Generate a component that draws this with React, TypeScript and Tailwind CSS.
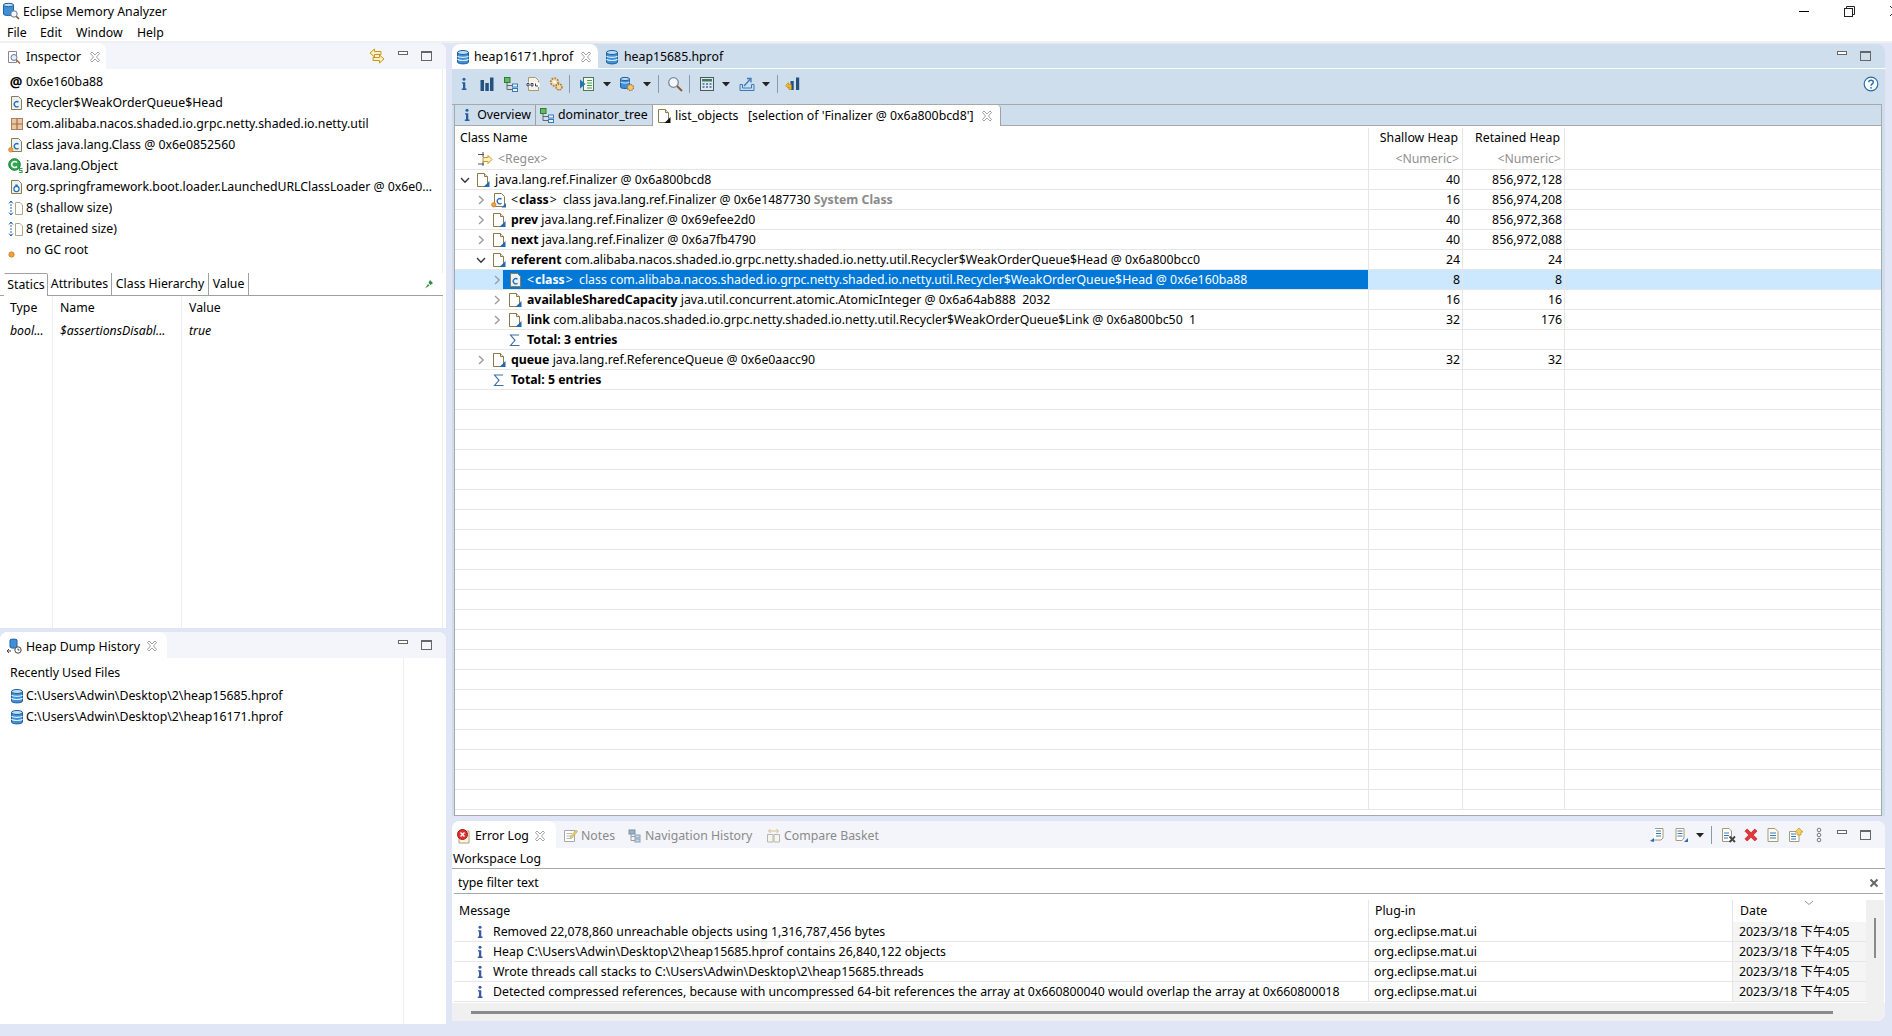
import React from "react";

const Db = ({ s = 16 }: { s?: number }) => (
  <svg width={s} height={s} viewBox="0 0 16 16" className="shrink-0">
    <path d="M2.5 3.5C2.5 2 13.5 2 13.5 3.5V13C13.5 15.5 2.5 15.5 2.5 13Z" fill="#3f8fd6" stroke="#22609e" />
    <ellipse cx="8" cy="3.5" rx="5.5" ry="2" fill="#bcdcf4" stroke="#22609e" />
    <path d="M2.5 7C4 8.8 12 8.8 13.5 7M2.5 10.2C4 12 12 12 13.5 10.2" fill="none" stroke="#d8ecfa" strokeWidth="1.1" />
  </svg>
);
const Doc = ({ corner = "#2468aa" }: { corner?: string }) => (
  <svg width={16} height={16} viewBox="0 0 16 16" className="shrink-0">
    <path d="M2.5 1.5H9.5L12.5 4.5V14.5H2.5Z" fill="#fff" stroke="#8f7a48" />
    <path d="M9.5 1.5V4.5H12.5" fill="#f0e8d0" stroke="#8f7a48" />
    <path d="M14.5 9V15H8.5Z" fill={corner} />
  </svg>
);
const ClassDoc = ({ dot = false, light = false }: { dot?: boolean; light?: boolean }) => (
  <svg width={16} height={16} viewBox="0 0 16 16" className="shrink-0">
    <path d="M3.5 1.5H10.5L13.5 4.5V14.5H3.5Z" fill={light ? "#e8f2fb" : "#fff"} stroke="#8f7a48" />
    <path d="M10.5 7.2A2.6 2.6 0 1 0 10.5 11.2" fill="none" stroke="#2a6cb0" strokeWidth="1.3" />
    {dot && <circle cx="2.8" cy="12.8" r="2.3" fill="#f0a040" stroke="#c87820" strokeWidth="0.6" />}
    {!light && <path d="M15 11V15.5H10.5Z" fill="#2a6cb0" />}
  </svg>
);
const Sigma = () => (
  <svg width={16} height={16} viewBox="0 0 16 16" className="shrink-0">
    <path d="M12 3H3.5L8 8.3L3.5 13.5H12.5" fill="none" stroke="#3a6ea5" strokeWidth="1.1" />
  </svg>
);
const Chev = ({ open = false, light = false }: { open?: boolean; light?: boolean }) => (
  <svg width={12} height={12} viewBox="0 0 12 12" className="shrink-0">
    {open ? (
      <path d="M2 4L6 8.2L10 4" fill="none" stroke="#333" strokeWidth="1.3" />
    ) : (
      <path d="M4 2L8.2 6L4 10" fill="none" stroke={light ? "#8fa0ac" : "#999"} strokeWidth="1.3" />
    )}
  </svg>
);
const Min = () => <span className="block h-[4px] w-[10px] border border-[#666] bg-white" />;
const Max = () => (
  <span className="block h-[10px] w-[11px] border border-[#666] border-t-[2px] bg-transparent" />
);
const CloseX = () => (
  <svg width={12} height={12} viewBox="0 0 12 12" className="shrink-0">
    <path d="M1.5 2.5L3 1L6 4L9 1L10.5 2.5L7.5 6L10.5 9.5L9 11L6 8L3 11L1.5 9.5L4.5 6Z" fill="#fff" stroke="#8a8a8a" strokeWidth="0.8" />
  </svg>
);
const SizeIcon = () => (
  <svg width={16} height={16} viewBox="0 0 16 16" className="shrink-0">
    <path d="M7.5 2.5H12L14.5 5V14.5H7.5Z" fill="#fff" stroke="#b0a888" />
    <path d="M3 1V15" stroke="#2a6cb0" strokeDasharray="2 1" />
    <path d="M1 3.5L3 1L5 3.5M1 12.5L3 15L5 12.5" fill="none" stroke="#2a6cb0" />
  </svg>
);
const InfoI = ({ c = "#2a5d9c" }: { c?: string }) => (
  <svg width={16} height={16} viewBox="0 0 16 16" className="shrink-0">
    <circle cx="8" cy="3.2" r="1.5" fill={c} />
    <path d="M6 6.2H9.3V12.5H10.5V14H5.8V12.5H7V7.6H6Z" fill={c} />
  </svg>
);
const Tree = () => (
  <svg width={16} height={16} viewBox="0 0 16 16" className="shrink-0">
    <path d="M4 6.5V13.5H9M4 9.5H9" fill="none" stroke="#666" />
    <rect x="1.5" y="1.5" width="5.5" height="5" fill="#63bb63" stroke="#2e7d32" />
    <rect x="9.5" y="8" width="5" height="3" fill="#e8f2fb" stroke="#3a7ab8" />
    <rect x="9.5" y="12.5" width="5" height="3" fill="#e8f2fb" stroke="#3a7ab8" />
  </svg>
);
const Bars = () => (
  <svg width={16} height={16} viewBox="0 0 16 16" className="shrink-0">
    <rect x="1.5" y="4" width="3.5" height="11" fill="#24527f" />
    <rect x="6.3" y="7" width="3.5" height="8" fill="#24527f" />
    <rect x="11" y="1.5" width="3.5" height="13.5" fill="#24527f" />
  </svg>
);
const Oql = () => (
  <svg width={16} height={16} viewBox="0 0 16 16" className="shrink-0">
    <path d="M3.5 1.5H10.5L13.5 4.5V14.5H3.5Z" fill="#f6f2e6" stroke="#a89a78" />
    <path d="M1.5 6.5H14.5V11H1.5Z" fill="#ffffff" />
    <path d="M2 7.5V10H4V7.5ZM6 7.5V10H8V7.5ZM10.5 7.5V10H13" fill="none" stroke="#2c3a5a" />
  </svg>
);
const Gear = () => (
  <svg width={16} height={16} viewBox="0 0 16 16" className="shrink-0">
    <circle cx="6.5" cy="6" r="3.7" fill="#f2e2c0" stroke="#b08840" strokeWidth="2" strokeDasharray="1.8 1" />
    <circle cx="11" cy="11" r="3" fill="#f0d8a8" stroke="#a87830" strokeWidth="1.4" strokeDasharray="1.6 0.9" />
    <circle cx="6.5" cy="6" r="1.2" fill="#fff" />
  </svg>
);
const Outline = () => (
  <svg width={16} height={16} viewBox="0 0 16 16" className="shrink-0">
    <rect x="4.5" y="1.5" width="10" height="13" fill="#f2f8ec" stroke="#4a7a5a" />
    <path d="M8 4.5H13M8 7H13M8 9.5H13M8 12H13" stroke="#4a9a5a" />
    <path d="M1 3.5L6.5 8L1 12.5Z" fill="#1f78b8" />
  </svg>
);
const DbGear = () => (
  <svg width={16} height={16} viewBox="0 0 16 16" className="shrink-0">
    <path d="M1.5 3C1.5 1.5 10.5 1.5 10.5 3V11C10.5 13 1.5 13 1.5 11Z" fill="#3f8fd6" stroke="#22609e" />
    <ellipse cx="6" cy="3" rx="4.5" ry="1.6" fill="#bcdcf4" stroke="#22609e" />
    <path d="M1.5 6C3 7.4 9 7.4 10.5 6" fill="none" stroke="#d8ecfa" />
    <circle cx="11.5" cy="11.5" r="3" fill="#f0c878" stroke="#a87830" strokeWidth="1.3" strokeDasharray="1.5 0.8" />
  </svg>
);
const Mag = () => (
  <svg width={16} height={16} viewBox="0 0 16 16" className="shrink-0">
    <circle cx="6.5" cy="6.5" r="4.8" fill="#f4f8fc" stroke="#7a8a9a" strokeWidth="1.3" />
    <path d="M10 10L15 15" stroke="#8a5a3a" strokeWidth="2" />
  </svg>
);
const Calc = () => (
  <svg width={16} height={16} viewBox="0 0 16 16" className="shrink-0">
    <rect x="1.5" y="1.5" width="13" height="13" fill="#dfe8ee" stroke="#4a5a5a" />
    <rect x="3" y="3" width="10" height="2.5" fill="#3f7a5a" />
    <path d="M3.5 8H5.5M7 8H9M10.5 8H12.5M3.5 11H5.5M7 11H9M10.5 11H12.5" stroke="#3a6aa8" strokeWidth="1.4" />
  </svg>
);
const Export = () => (
  <svg width={16} height={16} viewBox="0 0 16 16" className="shrink-0">
    <path d="M1 8.5V14.5H15V8.5H12.5V12H3.5V8.5Z" fill="#c8dcf0" stroke="#3a7ab8" />
    <path d="M5 10L11 3.5M8 2.5H12V6.5" fill="none" stroke="#3a7ab8" strokeWidth="1.3" />
  </svg>
);
const BarsArrow = () => (
  <svg width={16} height={16} viewBox="0 0 16 16" className="shrink-0">
    <rect x="5.5" y="5" width="3.2" height="9" fill="#24527f" />
    <rect x="11" y="1.5" width="3.2" height="12.5" fill="#24527f" />
    <path d="M0.5 9.5L3.5 6.5V8.5H6.5V13.5H4V11H3.5V12.5Z" fill="#f0b828" stroke="#b07810" strokeWidth="0.5" />
  </svg>
);
const Dd = () => (
  <svg width={8} height={8} viewBox="0 0 8 8" className="shrink-0">
    <path d="M0 2H8L4 6.5Z" fill="#222" />
  </svg>
);
const Sep = () => <span className="block h-[18px] w-px bg-[#8a9aaa]" />;

const rowsData: {
  lvl: 0 | 1 | 2;
  open?: boolean;
  chev?: boolean;
  icon: string;
  bold?: string;
  cls?: boolean;
  text?: string;
  sys?: string;
  s?: string;
  r?: string;
  sel?: boolean;
}[] = [
  { lvl: 0, open: true, chev: true, icon: "doc", text: "java.lang.ref.Finalizer @ 0x6a800bcd8", s: "40", r: "856,972,128" },
  { lvl: 1, chev: true, icon: "dot", cls: true, text: " class java.lang.ref.Finalizer @ 0x6e1487730 ", sys: "System Class", s: "16", r: "856,974,208" },
  { lvl: 1, chev: true, icon: "doc", bold: "prev", text: " java.lang.ref.Finalizer @ 0x69efee2d0", s: "40", r: "856,972,368" },
  { lvl: 1, chev: true, icon: "doc", bold: "next", text: " java.lang.ref.Finalizer @ 0x6a7fb4790", s: "40", r: "856,972,088" },
  { lvl: 1, open: true, chev: true, icon: "doc", bold: "referent", text: " com.alibaba.nacos.shaded.io.grpc.netty.shaded.io.netty.util.Recycler$WeakOrderQueue$Head @ 0x6a800bcc0", s: "24", r: "24" },
  { lvl: 2, chev: true, icon: "cl", cls: true, text: " class com.alibaba.nacos.shaded.io.grpc.netty.shaded.io.netty.util.Recycler$WeakOrderQueue$Head @ 0x6e160ba88", s: "8", r: "8", sel: true },
  { lvl: 2, chev: true, icon: "doc", bold: "availableSharedCapacity", text: " java.util.concurrent.atomic.AtomicInteger @ 0x6a64ab888  2032", s: "16", r: "16" },
  { lvl: 2, chev: true, icon: "doc", bold: "link", text: " com.alibaba.nacos.shaded.io.grpc.netty.shaded.io.netty.util.Recycler$WeakOrderQueue$Link @ 0x6a800bc50  1", s: "32", r: "176" },
  { lvl: 2, icon: "sum", bold: "Total: 3 entries" },
  { lvl: 1, chev: true, icon: "doc", bold: "queue", text: " java.lang.ref.ReferenceQueue @ 0x6e0aacc90", s: "32", r: "32" },
  { lvl: 1, icon: "sum", bold: "Total: 5 entries" },
];
const indent = ["pl-[4px]", "pl-[20px]", "pl-[36px]"];
const emptyRows = Array.from({ length: 21 }, (_, i) => i);

const logRows = [
  "Removed 22,078,860 unreachable objects using 1,316,787,456 bytes",
  "Heap C:\\Users\\Adwin\\Desktop\\2\\heap15685.hprof contains 26,840,122 objects",
  "Wrote threads call stacks to C:\\Users\\Adwin\\Desktop\\2\\heap15685.threads",
  "Detected compressed references, because with uncompressed 64-bit references the array at 0x660800040 would overlap the array at 0x660800018",
];

const InspRow = ({ icon, children }: { icon: React.ReactNode; children: React.ReactNode }) => (
  <div className="flex h-[21px] items-center">
    <span className="flex w-[26px] shrink-0 justify-end pr-[2px]">{icon}</span>
    <span className="whitespace-pre pt-[2px]">{children}</span>
  </div>
);

export default function App() {
  return (
    <div className="flex h-[1036px] w-[1892px] flex-col overflow-hidden bg-[#e1e6f6] font-['Noto_Sans','Noto_Sans_CJK_SC',sans-serif] text-[12.3px] leading-none text-black">
      {/* Title bar */}
      <div className="flex h-[22px] items-center bg-white pl-[2px] pt-[2px]">
        <svg width={18} height={18} viewBox="0 0 18 18" className="-mt-[2px] shrink-0">
          <path d="M1.5 3C1.5 1 11.5 1 11.5 3V12C11.5 14 1.5 14 1.5 12Z" fill="#3f8fd6" stroke="#22609e" />
          <ellipse cx="6.5" cy="3" rx="5" ry="1.7" fill="#bcdcf4" stroke="#22609e" />
          <circle cx="12" cy="12" r="3.2" fill="#f4f8fc" stroke="#6a7a8a" />
          <path d="M14.2 14.2L17 17" stroke="#7a5a3a" strokeWidth="1.6" />
        </svg>
        <span className="ml-[3px]">Eclipse Memory Analyzer</span>
        <div className="-mt-[2px] ml-auto flex items-center">
          <span className="block h-px w-[10px] bg-black" />
          <svg width={11} height={11} viewBox="0 0 11 11" className="ml-[35px] shrink-0">
            <rect x="0.5" y="2.5" width="8" height="8" fill="#fff" stroke="#222" />
            <path d="M2.5 2.5V0.5H10.5V8.5H8.5" fill="none" stroke="#222" />
          </svg>
          <svg width={2} height={10} viewBox="0 0 2 10" className="ml-[35px] shrink-0">
            <path d="M0 0L2 2M0 10L2 8" stroke="#222" />
          </svg>
        </div>
      </div>
      {/* Menu */}
      <div className="flex h-[19px] items-center bg-white pl-[7px] pt-[3px]">
        <span className="w-[33px]">File</span>
        <span className="w-[36px]">Edit</span>
        <span className="w-[61px]">Window</span>
        <span>Help</span>
      </div>
      {/* Body */}
      <div className="flex min-h-0 flex-1 border-t-[2px] border-[#f0f0f0]">
        {/* Left column */}
        <div className="flex w-[446px] shrink-0 flex-col gap-[4px] pb-[12px]">
          <div className="flex h-[585px] flex-col overflow-hidden rounded-tr-[8px] bg-white">
            <div className="flex h-[26px] items-stretch bg-[#f3f5fb]">
              <div className="flex w-[106px] items-center gap-[3px] rounded-tr-[8px] bg-white pl-[7px] pt-[1px]">
                <svg width={14} height={14} viewBox="0 0 14 14" className="shrink-0">
                  <path d="M1.5 1.5H9.5V12.5H1.5Z" fill="#fff" stroke="#8a8a8a" />
                  <circle cx="7" cy="7.5" r="3" fill="#e4eef8" stroke="#6a7a9a" />
                  <path d="M9.5 10L13 13.5" stroke="#a06030" strokeWidth="1.5" />
                </svg>
                <span className="ml-[2px] pt-[2px]">Inspector</span>
                <span className="ml-[5px]"><CloseX /></span>
              </div>
              <div className="ml-auto flex items-center pr-[14px]">
                <svg width={16} height={16} viewBox="0 0 16 16" className="shrink-0">
                  <path d="M1 5L5.5 1V3.5H12V6.5H5.5V9Z" fill="#fdf0c0" stroke="#c89820" />
                  <path d="M15 11L10.5 7V9.5H4V12.5H10.5V15Z" fill="#fdf0c0" stroke="#c89820" />
                </svg>
                <span className="-mt-[6px] ml-[13px]"><Min /></span>
                <span className="ml-[13px]"><Max /></span>
              </div>
            </div>
            <div className="mr-[3px] flex h-[204px] flex-col border-r border-[#eeeeee] pt-[2px]">
              <InspRow icon={<span className="w-[16px] text-center text-[14px] font-bold">@</span>}>0x6e160ba88</InspRow>
              <InspRow icon={<ClassDoc light />}>Recycler$WeakOrderQueue$Head</InspRow>
              <InspRow
                icon={
                  <svg width={14} height={14} viewBox="0 0 14 14" className="shrink-0">
                    <rect x="1.5" y="1.5" width="11" height="11" fill="#e8c8a0" stroke="#b08060" />
                    <path d="M7 1.5V12.5M1.5 7H12.5" stroke="#a86a4a" strokeWidth="1.2" />
                  </svg>
                }
              >
                com.alibaba.nacos.shaded.io.grpc.netty.shaded.io.netty.util
              </InspRow>
              <InspRow icon={<ClassDoc dot light />}>class java.lang.Class @ 0x6e0852560</InspRow>
              <InspRow
                icon={
                  <svg width={16} height={16} viewBox="0 0 16 16" className="shrink-0">
                    <circle cx="6.5" cy="6.5" r="5.8" fill="#2fa84f" stroke="#1c7a3a" />
                    <path d="M9 4.6A3 3 0 1 0 9 8.4" fill="none" stroke="#fff" strokeWidth="1.6" />
                    <path d="M14.5 10.5H11.5V12.5H14V14.5H11" fill="none" stroke="#2fa84f" strokeWidth="1.2" />
                  </svg>
                }
              >
                java.lang.Object
              </InspRow>
              <InspRow
                icon={
                  <svg width={16} height={16} viewBox="0 0 16 16" className="shrink-0">
                    <path d="M3.5 1.5H10.5L13.5 4.5V14.5H3.5Z" fill="#eaf2fb" stroke="#8f7a48" />
                    <circle cx="8.5" cy="10" r="2.6" fill="#fff" stroke="#2a6cb0" strokeWidth="1.2" />
                    <rect x="7.3" y="5.5" width="2.4" height="2.4" fill="#2a6cb0" />
                  </svg>
                }
              >
                org.springframework.boot.loader.LaunchedURLClassLoader @ 0x6e0...
              </InspRow>
              <InspRow icon={<SizeIcon />}>8 (shallow size)</InspRow>
              <InspRow icon={<SizeIcon />}>8 (retained size)</InspRow>
              <InspRow
                icon={
                  <svg width={16} height={16} viewBox="0 0 16 16" className="shrink-0">
                    <circle cx="3.5" cy="12.5" r="2.6" fill="#f0a040" stroke="#d08020" />
                  </svg>
                }
              >
                no GC root
              </InspRow>
            </div>
            <div className="mr-[3px] flex h-[23px] items-stretch border-b border-[#a0a0a0] pl-[4px]">
              <div className="-mb-px flex w-[44px] items-center justify-center rounded-tr-[2px] border-x border-t border-[#a0a0a0] border-l-transparent bg-white pt-[1px]">Statics</div>
              <div className="flex w-[64px] items-center justify-center border-r border-[#a0a0a0] pt-[1px]">Attributes</div>
              <div className="flex w-[97px] items-center justify-center border-r border-[#a0a0a0] pt-[1px]">Class Hierarchy</div>
              <div className="flex w-[40px] items-center justify-center border-r border-[#a0a0a0] pt-[1px]">Value</div>
              <div className="ml-auto flex items-center pr-[9px]">
                <svg width={10} height={10} viewBox="0 0 10 10" className="shrink-0">
                  <path d="M6 1L9 4L6.5 6L4.5 4ZM4 5L5.5 6.5L1 9.5Z" fill="#2e8b3e" />
                </svg>
              </div>
            </div>
            <div className="mr-[3px] flex min-h-0 flex-1 pl-[2px]">
              <div className="flex w-[51px] flex-col border-r border-[#eeeeee] pl-[8px]">
                <div className="flex h-[24px] items-center">Type</div>
                <div className="flex h-[23px] items-center italic">bool...</div>
              </div>
              <div className="flex w-[129px] flex-col border-r border-[#eeeeee] pl-[7px]">
                <div className="flex h-[24px] items-center">Name</div>
                <div className="flex h-[23px] items-center italic">$assertionsDisabl...</div>
              </div>
              <div className="flex flex-1 flex-col border-r border-[#eeeeee] pl-[7px]">
                <div className="flex h-[24px] items-center">Value</div>
                <div className="flex h-[23px] items-center italic">true</div>
              </div>
            </div>
          </div>
          <div className="flex min-h-0 flex-1 flex-col overflow-hidden rounded-t-[8px] bg-white">
            <div className="flex h-[26px] items-stretch bg-[#f3f5fb]">
              <div className="flex w-[167px] items-center rounded-tr-[8px] bg-white pl-[6px] pt-[2px]">
                <svg width={16} height={16} viewBox="0 0 16 16" className="shrink-0">
                  <path d="M4 2C4 0.8 11 0.8 11 2V9C11 10.5 4 10.5 4 9Z" fill="#3f8fd6" stroke="#22609e" />
                  <circle cx="12" cy="12" r="3.2" fill="#fff" stroke="#444" />
                  <path d="M12 10.5V12H13.5M1 13H5M3 11L1 13L3 15" fill="none" stroke="#444" />
                </svg>
                <span className="ml-[4px] pt-[2px]">Heap Dump History</span>
                <span className="ml-[6px]"><CloseX /></span>
              </div>
              <div className="ml-auto flex items-center pr-[14px]">
                <span className="-mt-[6px]"><Min /></span>
                <span className="ml-[13px]"><Max /></span>
              </div>
            </div>
            <div className="flex min-h-0 w-[404px] flex-1 flex-col border-r border-[#eeeeee] pl-[10px] pt-[2px]">
              <div className="flex h-[25px] items-center pt-[2px]">Recently Used Files</div>
              <div className="-ml-[1px] flex h-[21px] items-center gap-[1px]"><Db /><span className="pt-[2px]">C:\Users\Adwin\Desktop\2\heap15685.hprof</span></div>
              <div className="-ml-[1px] flex h-[21px] items-center gap-[1px]"><Db /><span className="pt-[2px]">C:\Users\Adwin\Desktop\2\heap16171.hprof</span></div>
            </div>
          </div>
        </div>
        {/* Right column */}
        <div className="ml-[6px] flex w-[1433px] shrink-0 flex-col gap-[5px] pt-[1px]">
          {/* Editor stack */}
          <div className="flex h-[772px] flex-col overflow-hidden rounded-t-[8px] bg-[#cfdeed]">
            <div className="flex h-[25px] items-stretch border-b border-white">
              <div className="flex w-[146px] items-center rounded-tr-[8px] bg-white pl-[3px] pt-[1px]">
                <Db />
                <span className="ml-[3px] pt-[2px]">heap16171.hprof</span>
                <span className="ml-[7px]"><CloseX /></span>
              </div>
              <div className="flex items-center pl-[6px] pt-[1px]">
                <Db />
                <span className="ml-[4px] pt-[2px]">heap15685.hprof</span>
              </div>
              <div className="ml-auto flex items-center pr-[14px]">
                <span className="-mt-[6px]"><Min /></span>
                <span className="ml-[13px]"><Max /></span>
              </div>
            </div>
            <div className="mr-[3px] flex h-[36px] items-center border-b border-[#a8a8a8] pb-[5px] pl-[4px] pr-[3px]">
              <span><InfoI /></span>
              <span className="ml-[7px]"><Bars /></span>
              <span className="ml-[8px]"><Tree /></span>
              <span className="ml-[6px]"><Oql /></span>
              <span className="ml-[7px]"><Gear /></span>
              <span className="ml-[5px]"><Sep /></span>
              <span className="ml-[9px]"><Outline /></span>
              <span className="ml-[8px]"><Dd /></span>
              <span className="ml-[8px]"><DbGear /></span>
              <span className="ml-[8px]"><Dd /></span>
              <span className="ml-[7px]"><Sep /></span>
              <span className="ml-[8px]"><Mag /></span>
              <span className="ml-[6px]"><Sep /></span>
              <span className="ml-[9px]"><Calc /></span>
              <span className="ml-[7px]"><Dd /></span>
              <span className="ml-[9px]"><Export /></span>
              <span className="ml-[7px]"><Dd /></span>
              <span className="ml-[7px]"><Sep /></span>
              <span className="ml-[7px]"><BarsArrow /></span>
              <span className="ml-auto">
                <svg width={16} height={16} viewBox="0 0 16 16" className="shrink-0">
                  <circle cx="8" cy="8" r="6.8" fill="#fff" stroke="#2a6ca8" strokeWidth="1.2" />
                  <path d="M5.8 6.2C5.8 3.6 10.3 3.6 10.3 6.2C10.3 8 8 7.8 8 9.8" fill="none" stroke="#2a6ca8" strokeWidth="1.4" />
                  <circle cx="8" cy="11.8" r="0.9" fill="#2a6ca8" />
                </svg>
              </span>
            </div>
            <div className="ml-[2px] mr-[3px] flex min-h-0 flex-1 flex-col border-x border-b border-[#a8a8a8]">
              <div className="flex h-[21px] items-stretch border-b border-[#a8a8a8]">
                <div className="flex w-[81px] items-center justify-center gap-[2px] border-r border-[#a0a0a0]">
                  <InfoI />
                  <span className="pt-[1px]">Overview</span>
                </div>
                <div className="flex w-[117px] items-center gap-[3px] border-r border-[#a0a0a0] pl-[3px]">
                  <Tree />
                  <span className="pt-[1px]">dominator_tree</span>
                </div>
                <div className="-mb-px flex w-[348px] items-center rounded-tr-[4px] border-r border-[#a0a0a0] bg-white pl-[3px]">
                  <Doc corner="#111111" />
                  <span className="ml-[3px] whitespace-pre pt-[1px]">list_objects   [selection of 'Finalizer @ 0x6a800bcd8']</span>
                  <span className="ml-[7px]"><CloseX /></span>
                </div>
              </div>
              <div className="min-h-0 flex-1 bg-white">
                <div className="flex h-[22px] items-stretch pt-[2px]">
                  <div className="flex w-[914px] items-center border-r border-[#e6e6e6] pl-[5px]">Class Name</div>
                  <div className="flex w-[94px] items-center justify-end border-r border-[#e6e6e6] pr-[4px]">Shallow Heap</div>
                  <div className="flex w-[102px] items-center justify-end border-r border-[#e6e6e6] pr-[4px]">Retained Heap</div>
                </div>
                <div className="flex h-[22px] items-stretch border-b border-[#e6e6e6] text-[#909090]">
                  <div className="flex w-[914px] items-center border-r border-[#e6e6e6] pl-[22px]">
                    <svg width={16} height={16} viewBox="0 0 16 16" className="shrink-0">
                      <path d="M1 3.5H7M1 13H7M6 1V6M6 10.5V15" stroke="#555" />
                      <path d="M6 6.5H11V4.5L15 8.5L11 12.5V10.5H6Z" fill="#fdf0c0" stroke="#c89820" />
                    </svg>
                    <span className="ml-[5px] pt-[2px]">&lt;Regex&gt;</span>
                  </div>
                  <div className="flex w-[94px] items-center justify-end border-r border-[#e6e6e6] pr-[3px] pt-[2px]">&lt;Numeric&gt;</div>
                  <div className="flex w-[102px] items-center justify-end border-r border-[#e6e6e6] pr-[3px] pt-[2px]">&lt;Numeric&gt;</div>
                </div>
                {rowsData.map((r, i) => (
                  <div key={i} className={`flex h-[20px] items-stretch border-b border-[#e6e6e6] ${r.sel ? "bg-[#cce8ff]" : ""}`}>
                    <div className={`flex w-[914px] items-stretch border-r border-[#e6e6e6] ${indent[r.lvl]} ${r.sel ? "border-r-[#cce8ff]" : ""}`}>
                      <span className="flex w-[12px] shrink-0 items-center">
                        {r.chev && <Chev open={r.open} light={r.sel} />}
                      </span>
                      <div className={`flex min-w-0 flex-1 items-center whitespace-pre pl-[4px] ${r.sel ? "bg-[#0078d7] text-white" : ""}`}>
                        {r.icon === "doc" && <Doc />}
                        {r.icon === "dot" && <ClassDoc dot />}
                        {r.icon === "cl" && <ClassDoc light />}
                        {r.icon === "sum" && <Sigma />}
                        <span className="ml-[4px] pt-[2px]">
                          {r.cls && (
                            <>
                              &lt;<b className="px-[1px]">class</b>&gt;<span className="inline-block w-[3px]" />
                            </>
                          )}
                          {r.bold && <b>{r.bold}</b>}
                          {r.text}
                          {r.sys && <b className="text-[#8a8a8a]">{r.sys}</b>}
                        </span>
                      </div>
                    </div>
                    <div className="flex w-[94px] items-center justify-end border-r border-[#e6e6e6] pr-[2px] pt-[2px]">{r.s}</div>
                    <div className="flex w-[102px] items-center justify-end border-r border-[#e6e6e6] pr-[2px] pt-[2px]">{r.r}</div>
                  </div>
                ))}
                {emptyRows.map((i) => (
                  <div key={i} className="flex h-[20px] items-stretch border-b border-[#e6e6e6]">
                    <div className="w-[914px] border-r border-[#e6e6e6]" />
                    <div className="w-[94px] border-r border-[#e6e6e6]" />
                    <div className="w-[102px] border-r border-[#e6e6e6]" />
                  </div>
                ))}
              </div>
            </div>
          </div>
          {/* Bottom stack */}
          <div className="flex h-[200px] flex-col overflow-hidden rounded-t-[8px] rounded-br-[8px] bg-white">
            <div className="flex h-[27px] items-stretch bg-[#f3f5fb]">
              <div className="flex w-[104px] items-center rounded-tr-[8px] bg-white pl-[4px] pt-[2px]">
                <svg width={16} height={16} viewBox="0 0 16 16" className="shrink-0">
                  <path d="M3 3H13V15H3Z" fill="#fdf6e0" stroke="#b0a070" />
                  <circle cx="6.5" cy="6.5" r="5" fill="#e03030" stroke="#a01818" />
                  <path d="M4.5 4.5L8.5 8.5M8.5 4.5L4.5 8.5" stroke="#fff" strokeWidth="1.4" />
                </svg>
                <span className="ml-[3px] pt-[2px]">Error Log</span>
                <span className="ml-[5px]"><CloseX /></span>
              </div>
              <div className="flex items-center pl-[7px] pt-[2px] text-[#8a8a8a]">
                <svg width={15} height={15} viewBox="0 0 15 15" className="shrink-0">
                  <path d="M1.5 2.5H11.5V13.5H1.5Z" fill="#fff" stroke="#a8a8a8" />
                  <path d="M3.5 5.5H9M3.5 8H8M3.5 10.5H8" stroke="#b8b8b8" />
                  <path d="M7 9L13 2L14.5 3.5L8.5 10.5Z" fill="#e8d070" stroke="#b0a050" strokeWidth="0.6" />
                </svg>
                <span className="ml-[3px] w-[45px] pt-[2px]">Notes</span>
                <svg width={14} height={14} viewBox="0 0 14 14" className="ml-[2px] shrink-0">
                  <rect x="1" y="1" width="6" height="4" fill="#9ab0c8" stroke="#7a90a8" />
                  <rect x="7" y="6" width="5" height="3" fill="#c4d4e4" stroke="#8aa0b8" />
                  <rect x="7" y="10" width="5" height="3" fill="#c4d4e4" stroke="#8aa0b8" />
                  <path d="M3 5V11.5H7M3 7.5H7" fill="none" stroke="#9a9a9a" />
                </svg>
                <span className="ml-[3px] w-[120px] pt-[2px]">Navigation History</span>
                <svg width={15} height={15} viewBox="0 0 15 15" className="ml-[1px] shrink-0">
                  <path d="M1.5 6.5H7V14H1.5ZM8 6.5H13.5V14H8Z" fill="#f6f6f0" stroke="#b8b8a8" />
                  <path d="M3 3H12M4.5 1L2.5 3L4.5 5M10.5 1L12.5 3L10.5 5" fill="none" stroke="#d8c088" />
                </svg>
                <span className="ml-[3px] pt-[2px]">Compare Basket</span>
              </div>
              <div className="ml-auto flex items-center pr-[14px]">
                <svg width={16} height={16} viewBox="0 0 16 16" className="shrink-0">
                  <path d="M6 1.5H14V11L12 13H4" fill="#fff" stroke="#a89a78" />
                  <path d="M7 4H12M7 6.5H12M7 9H12" stroke="#3a7ab8" />
                  <path d="M1 14L5 15V11Z" fill="#2a6cb0" />
                </svg>
                <span className="ml-[8px]">
                  <svg width={16} height={16} viewBox="0 0 16 16" className="shrink-0">
                    <path d="M3 1.5H11V11L9 13.5H3Z" fill="#fff" stroke="#a89a78" />
                    <path d="M4.5 4H9.5M4.5 6.5H9.5M4.5 9H9.5" stroke="#3a7ab8" />
                    <path d="M15 11V15H11Z" fill="#2a6cb0" />
                  </svg>
                </span>
                <span className="ml-[7px]"><Dd /></span>
                <span className="ml-[7px]"><Sep /></span>
                <span className="ml-[8px]">
                  <svg width={16} height={16} viewBox="0 0 16 16" className="shrink-0">
                    <path d="M2.5 1.5H9L11.5 4V14.5H2.5Z" fill="#fff" stroke="#a89a78" />
                    <path d="M4 6H9M4 8.5H9M4 11H8" stroke="#3a7ab8" />
                    <path d="M9.5 9.5L15 15M15 9.5L9.5 15" stroke="#444" strokeWidth="1.8" />
                  </svg>
                </span>
                <span className="ml-[7px]">
                  <svg width={16} height={16} viewBox="0 0 16 16" className="shrink-0">
                    <path d="M2 4.2L4.2 2L8 5.8L11.8 2L14 4.2L10.2 8L14 11.8L11.8 14L8 10.2L4.2 14L2 11.8L5.8 8Z" fill="#e53838" stroke="#c02828" strokeWidth="0.8" />
                  </svg>
                </span>
                <span className="ml-[6px]">
                  <svg width={16} height={16} viewBox="0 0 16 16" className="shrink-0">
                    <path d="M3 1.5H10L13 4.5V14.5H3Z" fill="#fdfbf0" stroke="#a89a78" />
                    <path d="M5 6H11M5 8.5H11M5 11H11" stroke="#3a7ab8" />
                  </svg>
                </span>
                <span className="ml-[7px]">
                  <svg width={16} height={16} viewBox="0 0 16 16" className="shrink-0">
                    <path d="M1.5 4.5H11V14.5H1.5Z" fill="#fff" stroke="#a89a78" />
                    <path d="M3 7H8M3 9.5H8M3 12H8" stroke="#3a7ab8" />
                    <path d="M7 5L11 1L15 5H13V8H9V5Z" fill="#f4d060" stroke="#c09820" strokeWidth="0.7" />
                  </svg>
                </span>
                <span className="ml-[10px]">
                  <svg width={10} height={16} viewBox="0 0 10 16" className="shrink-0">
                    <circle cx="5" cy="3" r="1.8" fill="none" stroke="#777" />
                    <circle cx="5" cy="8" r="1.8" fill="none" stroke="#777" />
                    <circle cx="5" cy="13" r="1.8" fill="none" stroke="#777" />
                  </svg>
                </span>
                <span className="-mt-[6px] ml-[13px]"><Min /></span>
                <span className="ml-[13px]"><Max /></span>
              </div>
            </div>
            <div className="flex h-[21px] items-center border-b border-[#a8a8a8] pl-[1px] pt-[2px]">Workspace Log</div>
            <div className="mx-[2px] mt-[3px] flex h-[22px] items-center justify-between border-b border-[#a8a8a8] pl-[4px] pr-[4px]">
              <span className="pt-[2px]">type filter text</span>
              <svg width={10} height={10} viewBox="0 0 10 10" className="shrink-0">
                <path d="M1.5 1.5L8.5 8.5M8.5 1.5L1.5 8.5" stroke="#666" strokeWidth="2" />
              </svg>
            </div>
            <div className="mt-[6px] flex min-h-0 flex-1 pl-[2px]">
              <div className="w-[1412px] shrink-0">
                <div className="flex h-[22px] items-stretch">
                  <div className="flex w-[915px] items-center border-r border-[#e6e6e6] pl-[5px]">Message</div>
                  <div className="flex w-[364px] items-center border-r border-[#e6e6e6] pl-[6px]">Plug-in</div>
                  <div className="relative flex flex-1 items-center pl-[7px]">
                    Date
                    <svg width={10} height={6} viewBox="0 0 10 6" className="absolute left-[71px] top-0">
                      <path d="M1 1L5 4.5L9 1" fill="none" stroke="#999" />
                    </svg>
                  </div>
                </div>
                {logRows.map((m) => (
                  <div key={m} className="flex h-[20px] items-stretch border-b border-[#e6e6e6]">
                    <div className="flex w-[915px] items-center whitespace-pre border-r border-[#e6e6e6] pl-[18px]">
                      <InfoI c="#3a5aa8" />
                      <span className="ml-[5px] pt-[2px]">{m}</span>
                    </div>
                    <div className="flex w-[364px] items-center border-r border-[#e6e6e6] pl-[5px] pt-[2px]">org.eclipse.mat.ui</div>
                    <div className="flex flex-1 items-center bg-[#f5f5f5] pl-[6px] pt-[2px]">2023/3/18 下午4:05</div>
                  </div>
                ))}
              </div>
              <div className="relative w-[18px] shrink-0 bg-[#f0f0f0]">
                <div className="absolute left-[8px] top-[18px] h-[40px] w-[2px] bg-[#8a8a8a]" />
              </div>
            </div>
            <div className="flex h-[18px] shrink-0 items-center bg-[#f0f0f0] pl-[19px]">
              <div className="h-[3px] w-[1362px] bg-[#8a8a8a]" />
            </div>
          </div>
        </div>
      </div>
    </div>
  );
}
